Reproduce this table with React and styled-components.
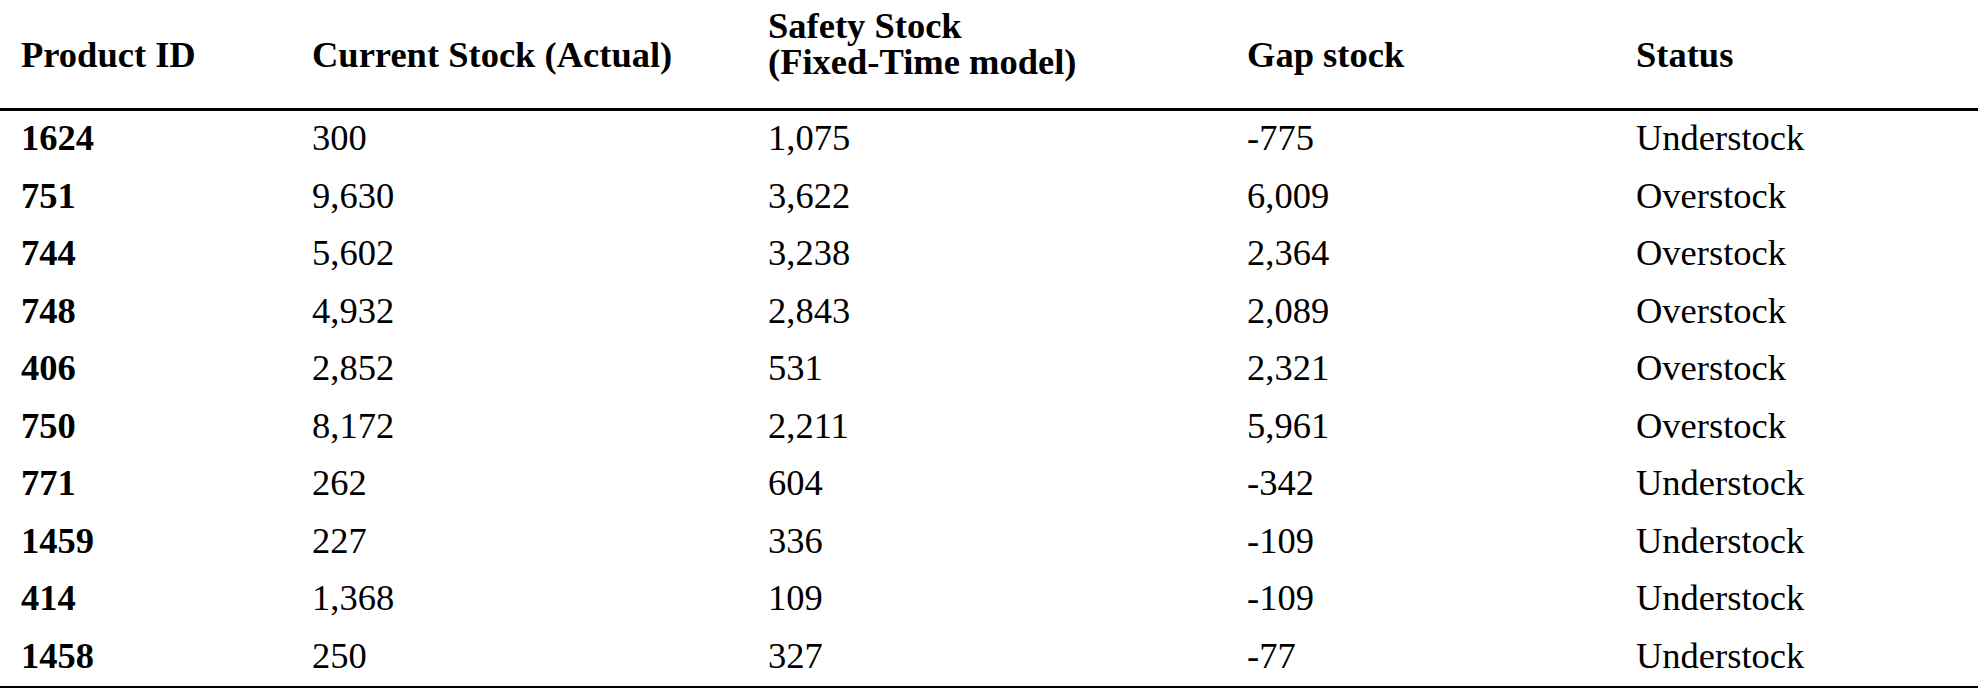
import React from "react";
import styled, { createGlobalStyle } from "styled-components";

const GlobalStyle = createGlobalStyle`
  body {
    margin: 0;
    background: #ffffff;
    color: #000000;
    font-family: "Liberation Serif", "Times New Roman", serif;
  }
`;

const columns = "291px 456px 479px 389px 1fr";

const Table = styled.div`
  width: 1978px;
  border-bottom: 3px solid #000;
`;

const HeaderRow = styled.div`
  display: grid;
  grid-template-columns: ${columns};
  height: 108px;
  border-bottom: 3px solid #000;
`;

const HeadCell = styled.div`
  padding: ${({ $twoLine }) => ($twoLine ? "8px" : "37px")} 0 0 21px;
  font-size: 36.5px;
  line-height: 36px;
  font-weight: 700;
  white-space: nowrap;
`;

const Row = styled.div`
  display: grid;
  grid-template-columns: ${columns};
  height: 57.5px;
`;

const Cell = styled.div`
  padding: 0 0 4px 21px;
  font-size: 36.5px;
  line-height: 53.5px;
  font-weight: ${({ $bold }) => ($bold ? 700 : 400)};
  white-space: nowrap;
`;

const rows = [
  ["1624", "300", "1,075", "-775", "Understock"],
  ["751", "9,630", "3,622", "6,009", "Overstock"],
  ["744", "5,602", "3,238", "2,364", "Overstock"],
  ["748", "4,932", "2,843", "2,089", "Overstock"],
  ["406", "2,852", "531", "2,321", "Overstock"],
  ["750", "8,172", "2,211", "5,961", "Overstock"],
  ["771", "262", "604", "-342", "Understock"],
  ["1459", "227", "336", "-109", "Understock"],
  ["414", "1,368", "109", "-109", "Understock"],
  ["1458", "250", "327", "-77", "Understock"],
];

const App = () => {
  return (
    <>
      <GlobalStyle />
      <Table>
        <HeaderRow>
          <HeadCell>Product ID</HeadCell>
          <HeadCell>Current Stock (Actual)</HeadCell>
          <HeadCell $twoLine>
            Safety Stock
            <br />
            (Fixed-Time model)
          </HeadCell>
          <HeadCell>Gap stock</HeadCell>
          <HeadCell>Status</HeadCell>
        </HeaderRow>
        {rows.map((r) => (
          <Row key={r[0]}>
            {r.map((v, i) => (
              <Cell key={i} $bold={i === 0}>
                {v}
              </Cell>
            ))}
          </Row>
        ))}
      </Table>
    </>
  );
};

export default App;
